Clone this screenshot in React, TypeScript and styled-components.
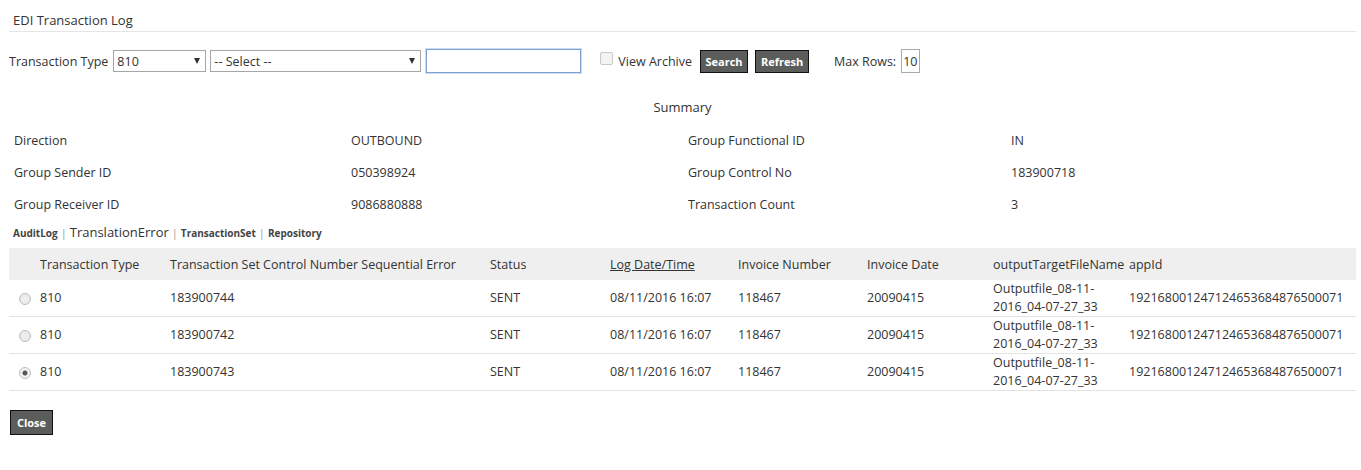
import React from 'react';
import styled, { createGlobalStyle } from 'styled-components';

const GlobalStyle = createGlobalStyle`
  body {
    margin: 0;
    background: #fff;
    font-family: "Open Sans", "Noto Sans", sans-serif;
    font-size: 12.5px;
    color: #333;
  }
`;

const Page = styled.div`
  padding: 0 5px 0 9px;
  width: 1347px;
  overflow: hidden;
`;

const Title = styled.div`
  font-size: 13px;
  padding: 11px 0 2px 4px;
  border-bottom: 1px solid #e5e5e5;
  line-height: 18px;
`;

const Toolbar = styled.div`
  display: flex;
  align-items: center;
  height: 24px;
  margin-top: 17px;
`;

const Label = styled.span<{ $ml?: number }>`
  margin-left: ${p => p.$ml || 0}px;
  margin-right: 5px;
  white-space: nowrap;
`;

const SelectWrap = styled.div<{ $w: number }>`
  position: relative;
  width: ${p => p.$w}px;
  height: 22px;
  margin-right: 4px;
`;

const Select = styled.select`
  appearance: none;
  width: 100%;
  height: 100%;
  border: 1px solid #a6a6a6;
  border-radius: 0;
  background: #fff;
  font: inherit;
  color: #333;
  padding: 0 0 0 3px;
`;

const Caret = styled.span`
  position: absolute;
  right: 6px;
  top: 8px;
  width: 0;
  height: 0;
  border-left: 3px solid transparent;
  border-right: 3px solid transparent;
  border-top: 6px solid #333;
  pointer-events: none;
`;

const SearchInput = styled.input`
  width: 155px;
  height: 24px;
  box-sizing: border-box;
  border: 1px solid #7da2ce;
  box-shadow: 0 0 0 1px #cbdcf3;
  margin-left: 1px;
`;

const Check = styled.span`
  display: inline-block;
  width: 11px;
  height: 11px;
  border: 1px solid #c8c8c8;
  border-radius: 2px;
  background: #f3f3f3;
  margin: 0 5px 0 19px;
  position: relative;
  top: -3px;
`;

const Button = styled.button<{ $w: number }>`
  width: ${p => p.$w}px;
  height: 23px;
  background: #5b5d5b;
  color: #fff;
  border: 1px solid #111;
  font-family: inherit;
  font-size: 11px;
  font-weight: 700;
  padding: 0;
  margin-left: 7px;
  cursor: pointer;
`;

const SmallBox = styled.input`
  width: 19px;
  height: 24px;
  box-sizing: border-box;
  border: 1px solid #aaa;
  font: inherit;
  color: #333;
  padding: 0 0 0 1px;
`;

const SummaryTitle = styled.div`
  text-align: center;
  font-size: 13px;
  margin-top: 25px;
  line-height: 18px;
`;

const SummaryGrid = styled.div`
  display: grid;
  grid-template-columns: 337px 337px 323px 1fr;
  grid-auto-rows: 32px;
  align-items: center;
  padding-left: 5px;
  margin-top: 8px;
`;

const Tabs = styled.div`
  display: flex;
  align-items: baseline;
  padding-left: 4px;
  margin-top: 1px;
  height: 22px;
  line-height: 22px;
`;

const Tab = styled.span<{ $big?: boolean }>`
  font-size: ${p => (p.$big ? '13px' : '10px')};
  font-weight: ${p => (p.$big ? 400 : 700)};
  color: ${p => (p.$big ? '#333' : '#444')};
`;

const Sep = styled.span`
  color: #999;
  font-size: 11px;
  margin: 0 3px;
`;

const Grid = styled.table`
  border-collapse: collapse;
  table-layout: fixed;
  width: 1347px;
  margin-top: 5px;
`;

const Th = styled.th<{ $u?: boolean }>`
  background: #efefef;
  height: 32px;
  text-align: left;
  font-weight: 400;
  padding: 0 0 0 5px;
  white-space: nowrap;
  text-decoration: ${p => (p.$u ? 'underline' : 'none')};
`;

const Td = styled.td`
  height: 36px;
  padding: 0 0 0 5px;
  border-bottom: 1px solid #e3e3e3;
  line-height: 18px;
  white-space: nowrap;
  overflow: visible;
`;

const WrapTd = styled(Td)`
  white-space: normal;
`;

const RadioCell = styled(Td)`
  padding: 0;
`;

const Radio = styled.span<{ $on?: boolean }>`
  display: inline-block;
  width: 10px;
  height: 10px;
  border-radius: 50%;
  border: 1px solid #bdbdbd;
  background: radial-gradient(circle, ${p => (p.$on ? '#555 0 2px, #f0f0f0 3px' : '#f0f0f0 0, #e6e6e6 100%')});
  margin-left: 10px;
  vertical-align: middle;
`;

const Footer = styled.div`
  margin-top: 19px;
  padding-left: 1px;
`;

const CloseButton = styled(Button)`
  height: 25px;
  margin-left: 0;
`;

const summary = [
  ['Direction', 'OUTBOUND', 'Group Functional ID', 'IN'],
  ['Group Sender ID', '050398924', 'Group Control No', '183900718'],
  ['Group Receiver ID', '9086880888', 'Transaction Count', '3'],
];

const rows = [
  { ctl: '183900744', on: false },
  { ctl: '183900742', on: false },
  { ctl: '183900743', on: true },
];

const colWidths = [26, 130, 320, 120, 128, 129, 126, 136, 232];

export default function App() {
  return (
    <Page>
      <GlobalStyle />
      <Title>EDI Transaction Log</Title>
      <Toolbar>
        <Label>Transaction Type</Label>
        <SelectWrap $w={93}>
          <Select defaultValue="810">
            <option>810</option>
          </Select>
          <Caret />
        </SelectWrap>
        <SelectWrap $w={211}>
          <Select>
            <option>-- Select --</option>
          </Select>
          <Caret />
        </SelectWrap>
        <SearchInput />
        <Check />
        <Label>View Archive</Label>
        <Button $w={48} style={{ marginLeft: 3 }}>Search</Button>
        <Button $w={54}>Refresh</Button>
        <Label $ml={25}>Max Rows:</Label>
        <SmallBox defaultValue="10" />
      </Toolbar>

      <SummaryTitle>Summary</SummaryTitle>
      <SummaryGrid>
        {summary.map(r => r.map((c, i) => <span key={r[0] + i}>{c}</span>))}
      </SummaryGrid>

      <Tabs>
        <Tab>AuditLog</Tab>
        <Sep>|</Sep>
        <Tab $big>TranslationError</Tab>
        <Sep>|</Sep>
        <Tab>TransactionSet</Tab>
        <Sep>|</Sep>
        <Tab>Repository</Tab>
      </Tabs>

      <Grid>
        <colgroup>
          {colWidths.map((w, i) => <col key={i} width={w} />)}
        </colgroup>
        <thead>
          <tr>
            <Th />
            <Th>Transaction Type</Th>
            <Th>Transaction Set Control Number Sequential Error</Th>
            <Th>Status</Th>
            <Th $u>Log Date/Time</Th>
            <Th>Invoice Number</Th>
            <Th>Invoice Date</Th>
            <Th>outputTargetFileName</Th>
            <Th>appId</Th>
          </tr>
        </thead>
        <tbody>
          {rows.map(r => (
            <tr key={r.ctl}>
              <RadioCell><Radio $on={r.on} /></RadioCell>
              <Td>810</Td>
              <Td>{r.ctl}</Td>
              <Td>SENT</Td>
              <Td>08/11/2016 16:07</Td>
              <Td>118467</Td>
              <Td>20090415</Td>
              <WrapTd>Outputfile_08-11-2016_04-07-27_33</WrapTd>
              <Td>192168001247124653684876500071</Td>
            </tr>
          ))}
        </tbody>
      </Grid>

      <Footer>
        <CloseButton $w={43}>Close</CloseButton>
      </Footer>
    </Page>
  );
}
